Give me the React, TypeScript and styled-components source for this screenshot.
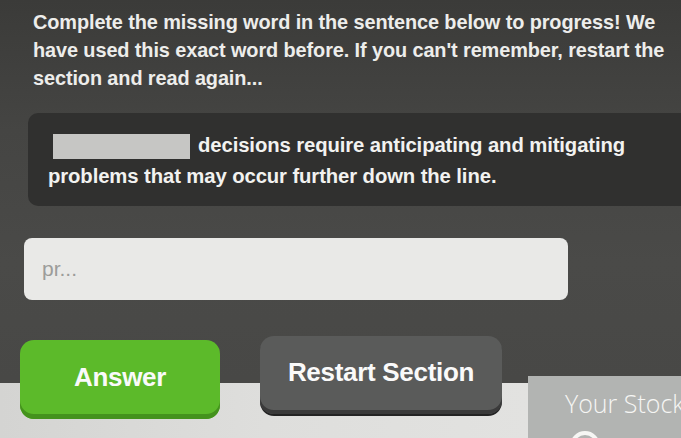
import React from "react";
import styled, { createGlobalStyle } from "styled-components";

const GlobalStyle = createGlobalStyle`
  html, body {
    margin: 0;
    padding: 0;
    background: #464644;
  }
  body {
    width: 681px;
    height: 438px;
    overflow: hidden;
    font-family: "Liberation Sans", Arial, sans-serif;
  }
`;

const Screen = styled.div`
  display: flex;
  flex-direction: column;
  width: 681px;
  height: 438px;
  background: linear-gradient(180deg, #3b3b39 0%, #454543 30%, #4a4a48 60%, #474745 100%);
  overflow: hidden;
`;

const Modal = styled.section`
  flex: none;
  display: flex;
  flex-direction: column;
  align-items: flex-start;
  padding: 8px 0 0 20px;
  height: 376px;
  box-sizing: border-box;

  & > * {
    flex-shrink: 0;
  }
`;

const Prompt = styled.p`
  margin: 0 0 0 13px;
  color: #ededeb;
  font-size: 19.9px;
  font-weight: 700;
  line-height: 28px;
  letter-spacing: -0.1px;
  white-space: nowrap;
`;

const SentenceCard = styled.div`
  align-self: stretch;
  margin: 21px 0 0 8px;
  padding: 17px 20px 14px;
  background: #30302f;
  border-radius: 10px 0 0 10px;
  color: #f2f2f0;
  font-size: 20.3px;
  font-weight: 700;
  line-height: 31px;
  letter-spacing: -0.1px;
  white-space: nowrap;
`;

const Blank = styled.span`
  display: inline-block;
  width: 137px;
  height: 25px;
  margin: 0 8px 0 5px;
  background: #c6c6c4;
  vertical-align: middle;
`;

const AnswerInput = styled.input`
  margin: 32px 0 0 4px;
  width: 544px;
  height: 62px;
  box-sizing: border-box;
  padding: 0 18px;
  border: none;
  border-radius: 8px;
  background: #e9e9e7;
  font-family: "Liberation Sans", Arial, sans-serif;
  font-size: 21px;
  color: #333;
  outline: none;

  &::placeholder {
    color: #9c9c9a;
  }
`;

const ButtonRow = styled.div`
  position: relative;
  z-index: 1;
  display: flex;
  align-items: flex-start;
  gap: 40px;
  margin-top: 40px;
`;

const ActionButton = styled.button<{ $variant: "primary" | "secondary" }>`
  display: flex;
  align-items: center;
  justify-content: center;
  box-sizing: border-box;
  border: none;
  border-radius: 14px;
  padding: 0 0 5px;
  color: #fafafa;
  font-family: "Liberation Sans", Arial, sans-serif;
  font-weight: 700;
  font-size: 26px;
  letter-spacing: -0.3px;
  background: ${p => (p.$variant === "primary" ? "#5cba2a" : "#5a5b5a")};
  box-shadow: ${p =>
    p.$variant === "primary"
      ? "inset 0 -5px 0 #44921d"
      : "inset 0 -4px 0 #3a3a3a, 0 2px 0 #232323"};
  width: ${p => (p.$variant === "primary" ? "200px" : "242px")};
  height: ${p => (p.$variant === "primary" ? "79px" : "78px")};
  margin-top: ${p => (p.$variant === "primary" ? "0" : "-4px")};
`;

const Footer = styled.footer`
  flex: 1;
  display: flex;
`;

const LightStrip = styled.div`
  flex: 1;
  margin-top: 7px;
  background: linear-gradient(90deg, #d4d4d2 0%, #dededc 50%, #e2e2e0 100%);
`;

const StockPanel = styled.div`
  width: 153px;
  padding: 12px 0 0 37px;
  box-sizing: border-box;
  background: #b2b4b2;
  color: #f6f6f4;
  font-family: "Open Sans", "Liberation Sans", sans-serif;
  font-weight: 300;
  font-size: 25px;
  line-height: 30px;
  white-space: nowrap;
  overflow: hidden;
`;

const StockRing = styled.svg`
  display: block;
  margin: 10px 0 0 2px;
`;

export default function App() {
  return (
    <>
      <GlobalStyle />
      <Screen>
        <Modal>
          <Prompt>
            Complete the missing word in the sentence below to progress! We
            <br />
            have used this exact word before. If you can't remember, restart the
            <br />
            section and read again...
          </Prompt>
          <SentenceCard>
            <Blank />
            decisions require anticipating and mitigating
            <br />
            problems that may occur further down the line.
          </SentenceCard>
          <AnswerInput placeholder="pr..." />
          <ButtonRow>
            <ActionButton $variant="primary">Answer</ActionButton>
            <ActionButton $variant="secondary">Restart Section</ActionButton>
          </ButtonRow>
        </Modal>
        <Footer>
          <LightStrip />
          <StockPanel>
            Your Stock
            <StockRing width="36" height="20" viewBox="0 0 36 20">
              <circle cx="18" cy="18" r="13" fill="none" stroke="#f6f6f4" strokeWidth="4" />
            </StockRing>
          </StockPanel>
        </Footer>
      </Screen>
    </>
  );
}
